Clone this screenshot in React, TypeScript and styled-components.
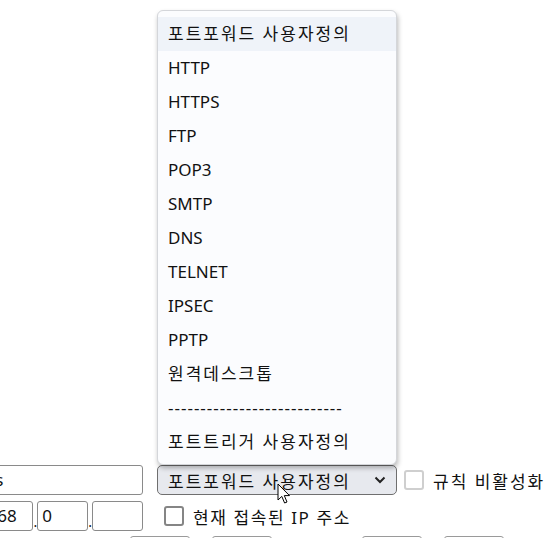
import React from "react";
import styled, { createGlobalStyle } from "styled-components";

const GlobalStyle = createGlobalStyle`
  html, body {
    margin: 0;
    padding: 0;
    background: #ffffff;
  }
  body {
    font-family: "Noto Sans", "Noto Sans CJK KR", sans-serif;
    color: #111111;
  }
`;

const Page = styled.div`
  position: relative;
  width: 549px;
  height: 538px;
  overflow: hidden;
`;

const Form = styled.div`
  display: grid;
  grid-template-columns: 204px auto;
  column-gap: 14px;
  row-gap: 6px;
  margin-left: -61px;
  padding-top: 465px;
`;

const TextInput = styled.div<{ $width?: number }>`
  box-sizing: border-box;
  width: ${(p) => (p.$width ? `${p.$width}px` : "100%")};
  height: 30px;
  border: 1px solid #8a8a8a;
  border-radius: 3px;
  padding: 0 4px;
  font-size: 17px;
  line-height: 28px;
  white-space: nowrap;
  overflow: hidden;
  flex-shrink: 0;
`;

const IpGroup = styled.div`
  display: flex;
  justify-content: flex-end;
  align-items: flex-end;
`;

const Dot = styled.span`
  width: 5px;
  text-align: center;
  font-size: 14px;
  line-height: 18px;
`;

const RightCell = styled.div<{ $indent?: number }>`
  display: flex;
  align-items: center;
  gap: 9px;
  padding-left: ${(p) => p.$indent || 0}px;
`;

const Select = styled.div`
  box-sizing: border-box;
  width: 240px;
  height: 30px;
  border: 1px solid #6f6f6f;
  border-radius: 5px;
  background: #e7e9ee;
  display: flex;
  align-items: center;
  justify-content: space-between;
  padding: 0 10px 0 10px;
  font-size: 17px;
  margin-right: -2px;
`;

// hangul runs wider in the original UI font, so space it out a little
const Ko = styled.span<{ $spacing?: number }>`
  letter-spacing: ${(p) => p.$spacing ?? 2}px;
  white-space: nowrap;
`;

const Check = styled.span<{ $muted?: boolean }>`
  box-sizing: border-box;
  width: 20px;
  height: 20px;
  border: 2px solid ${(p) => (p.$muted ? "#cfcfcf" : "#858585")};
  border-radius: 3px;
  background: #ffffff;
  flex-shrink: 0;
`;

const Label = styled.span`
  font-size: 17px;
  white-space: nowrap;
`;

const PeekRow = styled.div`
  display: flex;
  gap: 22px;
  padding-left: 130px;
  margin-top: 5px;
`;

const PeekBox = styled.div<{ $gap?: number }>`
  width: 58px;
  height: 20px;
  border: 1px solid #9a9a9a;
  border-radius: 3px;
  margin-left: ${(p) => p.$gap || 0}px;
`;

const Popup = styled.ul`
  position: absolute;
  left: 157px;
  top: 10px;
  width: 240px;
  box-sizing: border-box;
  margin: 0;
  padding: 6px 0 5px;
  list-style: none;
  background: #fbfcfe;
  border: 1px solid #d4d6da;
  border-radius: 6px;
  box-shadow: 1px 3px 5px rgba(0, 0, 0, 0.28);
`;

const Option = styled.li<{ $active?: boolean }>`
  height: 34px;
  line-height: 34px;
  padding-left: 10px;
  font-size: 17px;
  background: ${(p) => (p.$active ? "#eff3f9" : "transparent")};
  white-space: nowrap;
`;

const Pointer = styled.svg`
  position: absolute;
  left: 277px;
  top: 483px;
`;

const options: { text: string; spacing: number }[] = [
  { text: "포트포워드 사용자정의", spacing: 2 },
  { text: "HTTP", spacing: 0 },
  { text: "HTTPS", spacing: 0 },
  { text: "FTP", spacing: 0 },
  { text: "POP3", spacing: 0 },
  { text: "SMTP", spacing: 0 },
  { text: "DNS", spacing: 0 },
  { text: "TELNET", spacing: 0 },
  { text: "IPSEC", spacing: 0 },
  { text: "PPTP", spacing: 0 },
  { text: "원격데스크톱", spacing: 2 },
  { text: "---------------------------", spacing: 1 },
  { text: "포트트리거 사용자정의", spacing: 2 },
];

export default function App() {
  return (
    <Page>
      <GlobalStyle />
      <Form>
        <TextInput>Servers</TextInput>
        <RightCell>
          <Select>
            <Ko>포트포워드 사용자정의</Ko>
            <svg width="12" height="8" viewBox="0 0 12 8">
              <path d="M1.5 1.5 L6 6 L10.5 1.5" fill="none" stroke="#222" strokeWidth="2" />
            </svg>
          </Select>
          <Check $muted />
          <Label>
            <Ko>규칙 비활성화</Ko>
          </Label>
        </RightCell>
        <IpGroup>
          <TextInput $width={51}>192</TextInput>
          <Dot>.</Dot>
          <TextInput $width={51}>168</TextInput>
          <Dot>.</Dot>
          <TextInput $width={51}>0</TextInput>
          <Dot>.</Dot>
          <TextInput $width={51} />
        </IpGroup>
        <RightCell $indent={7}>
          <Check />
          <Label>
            <Ko $spacing={1.6}>현재 접속된 IP 주소</Ko>
          </Label>
        </RightCell>
      </Form>
      <PeekRow>
        <PeekBox />
        <PeekBox />
        <PeekBox $gap={68} />
        <PeekBox />
      </PeekRow>
      <Popup>
        {options.map((o, i) => (
          <Option key={o.text} $active={i === 0}>
            <Ko $spacing={o.spacing}>{o.text}</Ko>
          </Option>
        ))}
      </Popup>
      <Pointer width="14" height="22" viewBox="0 0 14 22">
        <path
          d="M1 1 L1 17 L4.8 13.4 L7.6 20 L10 19 L7.3 12.6 L12.5 12.6 Z"
          fill="#ffffff"
          stroke="#000000"
          strokeWidth="1"
          strokeLinejoin="round"
        />
      </Pointer>
    </Page>
  );
}
